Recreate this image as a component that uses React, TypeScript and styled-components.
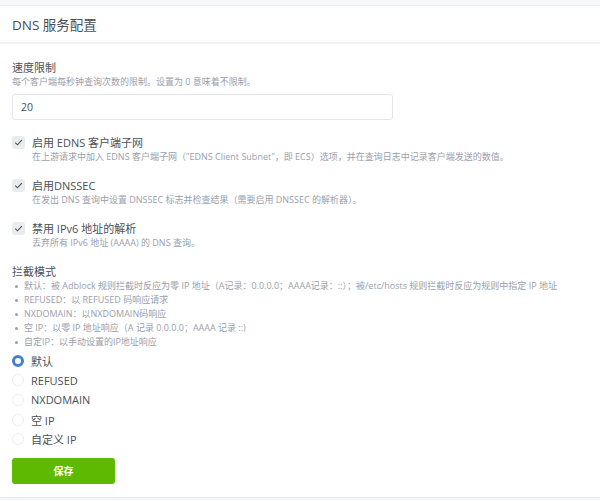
import React, { useState } from 'react';
import styled, { createGlobalStyle } from 'styled-components';

const GlobalStyle = createGlobalStyle`
  html, body {
    margin: 0;
    padding: 0;
    background: #f5f7fb;
  }
  body {
    font-family: "Open Sans", "Noto Sans CJK SC", sans-serif;
    color: #495057;
  }
`;

const Page = styled.div`
  padding: 5px 0 4px;
  background: #f5f7fb;
`;

const Card = styled.section`
  background: #fff;
  border-top: 1px solid #edf0f4;
  border-bottom: 1px solid #e6e8ee;
`;

const CardHeader = styled.header`
  height: 36px;
  display: flex;
  align-items: center;
  padding: 0 12px;
  font-size: 13.5px;
  color: #495057;
  border-bottom: 2px solid #f2f3f5;
`;

const CardBody = styled.div`
  padding: 16px 12px 13px;
`;

const FieldTitle = styled.div`
  font-size: 11px;
  line-height: 15px;
  color: #495057;
`;

const Hint = styled.div`
  font-size: 9px;
  line-height: 14px;
  color: #9aa0ac;
`;

const TextInput = styled.input`
  display: block;
  box-sizing: border-box;
  width: 381px;
  height: 26px;
  margin: 5px 0 15px;
  padding: 0 8px;
  font: inherit;
  font-size: 10.5px;
  color: #495057;
  border: 1px solid #e3e5ea;
  border-radius: 3px;
  outline: none;
`;

const CheckRow = styled.label`
  display: flex;
  gap: 7px;
  margin-bottom: 14px;
`;

const CheckBox = styled.span`
  flex: none;
  width: 13px;
  height: 13px;
  margin-top: 1px;
  border-radius: 3px;
  background: #e9ecef;
  display: flex;
  align-items: center;
  justify-content: center;
`;

const CheckText = styled.div`
  display: flex;
  flex-direction: column;
`;

const BulletList = styled.ul`
  margin: 0 0 2px;
  padding: 0 0 0 12px;
  list-style: none;
`;

const Bullet = styled.li`
  position: relative;
  font-size: 9px;
  line-height: 14px;
  color: #9aa0ac;
  &::before {
    content: '';
    position: absolute;
    left: -9px;
    top: 6px;
    width: 3px;
    height: 3px;
    border-radius: 50%;
    background: #9aa0ac;
  }
`;

const RadioRow = styled.label`
  display: flex;
  align-items: center;
  gap: 7px;
  height: 19.6px;
  font-size: 11px;
  color: #495057;
  cursor: pointer;
`;

const RadioDot = styled.span<{ $on: boolean }>`
  box-sizing: border-box;
  width: 12px;
  height: 12px;
  border-radius: 50%;
  background: #fff;
  border: ${(p) => (p.$on ? '3.5px solid #467fcf' : '1px solid #eceef1')};
`;

const SaveButton = styled.button`
  display: block;
  width: 103px;
  height: 26px;
  margin-top: 9px;
  border: none;
  border-radius: 3px;
  background: #5eba00;
  color: #fff;
  font: inherit;
  font-size: 10px;
  font-weight: 700;
  cursor: pointer;
`;

const Check = () => (
  <svg width="9" height="9" viewBox="0 0 9 9">
    <path d="M1.2 4.6 L3.5 6.8 L7.8 2.2" fill="none" stroke="#495057" strokeWidth="1.1" />
  </svg>
);

const checks = [
  {
    title: '启用 EDNS 客户端子网',
    hint: '在上游请求中加入 EDNS 客户端子网（"EDNS Client Subnet"，即 ECS）选项，并在查询日志中记录客户端发送的数值。',
  },
  {
    title: '启用DNSSEC',
    hint: '在发出 DNS 查询中设置 DNSSEC 标志并检查结果（需要启用 DNSSEC 的解析器）。',
  },
  {
    title: '禁用 IPv6 地址的解析',
    hint: '丢弃所有 IPv6 地址 (AAAA) 的 DNS 查询。',
  },
];

const bullets = [
  '默认：被 Adblock 规则拦截时反应为零 IP 地址（A记录：0.0.0.0；AAAA记录：::）；被/etc/hosts 规则拦截时反应为规则中指定 IP 地址',
  'REFUSED：以 REFUSED 码响应请求',
  'NXDOMAIN：以NXDOMAIN码响应',
  '空 IP：以零 IP 地址响应（A 记录 0.0.0.0；AAAA 记录 ::)',
  '自定IP：以手动设置的IP地址响应',
];

const modes = ['默认', 'REFUSED', 'NXDOMAIN', '空 IP', '自定义 IP'];

export default function App() {
  const [mode, setMode] = useState(0);
  return (
    <Page>
      <GlobalStyle />
      <Card>
        <CardHeader>DNS 服务配置</CardHeader>
        <CardBody>
          <FieldTitle>速度限制</FieldTitle>
          <Hint>每个客户端每秒钟查询次数的限制。设置为 0 意味着不限制。</Hint>
          <TextInput defaultValue="20" />
          {checks.map((c) => (
            <CheckRow key={c.title}>
              <CheckBox>
                <Check />
              </CheckBox>
              <CheckText>
                <FieldTitle>{c.title}</FieldTitle>
                <Hint>{c.hint}</Hint>
              </CheckText>
            </CheckRow>
          ))}
          <FieldTitle>拦截模式</FieldTitle>
          <BulletList>
            {bullets.map((b) => (
              <Bullet key={b}>{b}</Bullet>
            ))}
          </BulletList>
          {modes.map((m, i) => (
            <RadioRow key={m} onClick={() => setMode(i)}>
              <RadioDot $on={mode === i} />
              {m}
            </RadioRow>
          ))}
          <SaveButton>保存</SaveButton>
        </CardBody>
      </Card>
    </Page>
  );
}
